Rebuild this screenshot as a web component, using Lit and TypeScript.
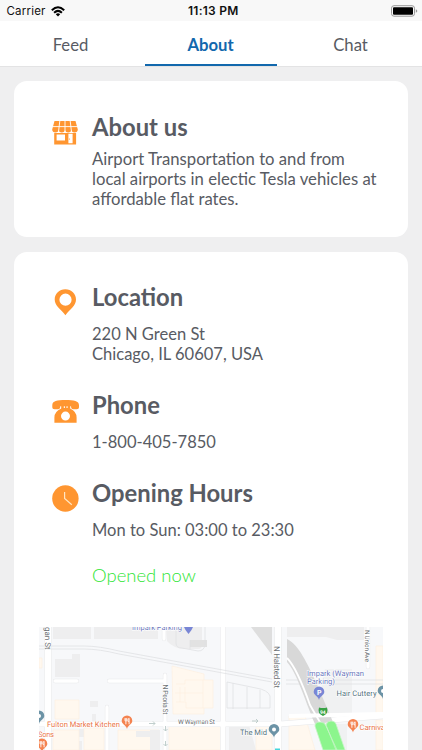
import { LitElement, html, svg, css } from "lit";
import { customElement, property } from "lit/decorators.js";

const icons: Record<string, unknown> = {
  store: svg`
    <path d="M3.5 1h21l2.3 8.4c0 1.7-1.3 3.1-3.2 3.1s-3.2-1.2-3.2-2.7c0 1.6-1.400 2.700-3.200 2.700S14 11.400 14 9.800c0 1.600-1.400 2.700-3.200 2.700S7.600 11.400 7.600 9.800c0 1.500-1.300 2.700-3.200 2.700S1.200 11.100 1.200 9.400z"/>
    <path d="M3.200 13h21.900v11.600H3.200zM5.600 14.600v6H14v-6zM17.400 13.700v9.500h4.200v-9.500z" fill-rule="evenodd"/>
    <circle cx="18.500" cy="19" r=".6"/>
    <path d="M1.500 6.600h25M8.800 1 7.600 11M14 1v11M19.200 1l1.200 10" fill="none" stroke="#fff" stroke-width=".9"/>`,
  pin: svg`<path fill-rule="evenodd" d="M14.300 1.300C8.300 1.300 3.700 5.700 3.700 11.500c0 6.400 6.200 9.600 10.700 15.800C19 21 25 17.900 25 11.500 25 5.700 20.400 1.300 14.300 1.300zM14.500 5.600a6.100 6.100 0 1 1 0 12.200 6.100 6.100 0 0 1 0-12.200z"/>`,
  phone: svg`
    <path d="M1.300 6.200C1.300 2 6 1 14.500 1S28 2 28 6.200v1.800c0 1.600-.8 2.200-2.300 2.200h-3.400c-1.700 0-2.100-.7-2.300-3H9.300C9.100 9.500 8.700 10.200 7 10.200H3.600C2.100 10.200 1.300 9.600 1.300 8z"/>
    <path fill-rule="evenodd" d="M10.200 7h2.600v2h1.100V7h1.600v2h1.100V7H19.200v2.400q6.400 3 6.400 9V23.800H3.400v-5.400q0-6 6.800-9zM14.500 12.600a4.500 4.500 0 1 0 0 9 4.500 4.500 0 0 0 0-9z"/>`,
  clock: svg`
    <circle cx="14.400" cy="14.500" r="13.200"/>
    <path d="M13.600 8v6.500l7.200 6.200" fill="none" stroke="#ffe6c4" stroke-width="1.200"/>`,
};

@customElement("info-section")
class InfoSection extends LitElement {
  @property() icon = "";
  @property() heading = "";

  static styles = css`
    :host { display: grid; grid-template-columns: 41px 1fr; }
    .icon { width: 29px; height: 29px; fill: #ff9631; margin-top: var(--icon-top, 7px); }
    h2 { margin: 0; font-size: 23.800px; line-height: 32px; font-weight: 700; white-space: nowrap; }
    .body { margin-top: var(--body-gap, 11px); font-size: var(--body-size, 16.550px); line-height: 20px; white-space: nowrap; }
  `;

  render() {
    return html`
      <svg class="icon" viewBox="0 0 29 29">${icons[this.icon]}</svg>
      <div><h2>${this.heading}</h2><div class="body"><slot></slot></div></div>
    `;
  }
}

const food = (x: number, y: number) => svg`
  <g transform="translate(${x} ${y})">
    <path class="food" d="M0-5.500a5.300 5.300 0 0 1 5.300 5.300C5.300 3.300 1 4 0 8-1 4-5.300 3.300-5.300-.2A5.300 5.300 0 0 1 0-5.500z"/>
    <path class="glyph" d="M-2-2.800v2.200c0 .6.400.9.900.9v3M-.2-2.800v2.200c0 .6-.3.900-.9.900M-1.100-2.800V0M2.100 3.300v-6C1.100-2.400.9-1 .9.300h1.200"/>
  </g>`;
const place = (x: number, y: number) => svg`
  <g transform="translate(${x} ${y})">
    <path class="place" d="M0-5.500a5.300 5.300 0 0 1 5.300 5.300C5.300 3.300 1 4 0 8-1 4-5.300 3.300-5.300-.2A5.300 5.300 0 0 1 0-5.500z"/>
    <circle r="2" fill="#fff"/>
  </g>`;

@customElement("street-map")
class StreetMap extends LitElement {
  static styles = css`
    :host { display: block; }
    svg { display: block; width: 344px; height: 123px; font-family: Roboto, sans-serif; text-rendering: geometricPrecision; }
    .block { fill: #eeeeef; }
    .shop { fill: #fff8ef; stroke: #fdeedd; stroke-width: .6; }
    .road { fill: none; stroke: #fff; stroke-linecap: round; }
    .edge { fill: none; stroke: #e7e8ea; stroke-linecap: round; }
    .rail { fill: none; stroke: #dfe1e3; stroke-width: .8; }
    .label { fill: #6c7074; stroke: #fff; stroke-width: 1.200px; paint-order: stroke; font-size: 7px; }
    .poi { font-size: 7.600px; fill: #557380; }
    .eat { fill: #ea7448; }
    .park { fill: #6b77bd; }
    .food { fill: #f48350; }
    .place { fill: #6c93a6; }
    .parking { fill: #7986d5; }
    .glyph { fill: none; stroke: #fff; stroke-width: .9; }
    .arrow { fill: none; stroke: #bacac7; stroke-width: .9; }
  `;

  render() {
    return html`<svg viewBox="39 627 344 123">
      <rect x="39" y="627" width="344" height="123" fill="#f7f8fa"/>
      <g class="block">
        <path d="M53 627h38v12H53zM94 627h64v12H94zM55 659h17v-5h8v23H55z"/>
        <path d="M90 701h8v6h-8zM92 714h4v7h-4zM79 729h5v8h-5zM73 741h9v9h-9z"/>
        <path d="M150 627h8v10h-8zM173 627h29v18q0 4-4 4h-14q-11-1-17-8l-1-14z"/>
        <path d="M287 627h77v13h-27l-11-3h-39zM229 725h20l7 25h-27z"/>
        <path d="M190 640h17v7h-17z" fill="#e2e2e2"/>
        <path d="M251 627h21v28z" fill="#dedede"/>
      </g>
      <path d="M325 669h27v45h-36zM330 724h17v26h-5z" fill="#f0f1f2"/>
      <g class="shop">
        <path d="M55 700h24v19H55zM53 730h26v20H53zM84 728h20v22H84zM118 730h41v20h-41z"/>
        <path d="M172 666l32 8v6h9v28h-9v6h-31z"/>
        <path d="M169 725h52v25h-52zM256 725h16v25h-16zM289 716h16l10 34h-26zM376 646h7v68h-7zM376 720h7v30h-7zM39 658h3v10h-3z"/>
        <path fill="none" d="M176 684h9v-4h19M175 693h28M176 702h10v6h18M203 680v28M185 687v14M180 687v15"/>
      </g>
      <path class="block" d="M136 731h24v6h-24zM150 730h10v20h-10z"/>
      <g class="edge">
        <path stroke-width="7.600" d="M48 624v130M278 624v130"/>
        <path stroke-width="5.800" d="M223 624v130M39 724H280L383 716"/>
        <path stroke-width="4.300" d="M165 675v75M55 681h22M109 681h56M107 707v43M164 627v12M368 627v40"/>
      </g>
      <g class="road">
        <path stroke-width="6.600" d="M48 624v130M278 624v130"/>
        <path stroke-width="4.800" d="M223 624v130M39 724H280L383 716"/>
        <path stroke-width="3.300" d="M165 675v75M55 681h22M109 681h56M107 707v43M164 627v12M368 627v40"/>
      </g>
      <g class="rail">
        <path d="M39 646h45q15 0 35 5l153 28M39 649h45q15 0 35 5l153 28M286 680h97M286 684h97"/>
        <path d="M227 682l29 6q12 2 14 8v12H227zM233 683v26M247 687v22M260 690v18M176 629v14q0 5 6 5l16 3q6 0 7-6v-18M190 640v9"/>
      </g>
      <path d="M287 639c12 6 20 24 29 43l17 40-18 2c-11-26-18-51-28-62z" fill="#d8d8d8"/>
      <path d="M287 658c8 8 17 30 23 47l11 19" fill="none" stroke="#fff" stroke-width="1.800"/>
      <path d="M289 716l94-2" stroke="#fff" stroke-width="4"/>
      <path d="M315 726q0-4 5-4t6 4l11 24h-14zM326 725q1-4 5-4t5 3l9 26h-9z" fill="#8cf58d" stroke="#c5f5c6" stroke-width=".8"/>
      <path class="arrow" d="M149 723.500h6m-2-2 2 2-2 2M252 721h6m-2-2 2 2-2 2M165.500 726v5m-2-2 2 2 2-2M165.500 741v5m-2-2 2 2 2-2"/>

      <text class="label" transform="translate(44.500 627) rotate(90)" style="font-size:8px">gan St</text>
      <text class="label" transform="translate(163 684.500) rotate(90)" textLength="30">N Peoria St</text>
      <text class="label" transform="translate(274 646) rotate(90)" textLength="42" style="font-size:8px">N Halsted St</text>
      <text class="label" transform="translate(365 630) rotate(90)" textLength="32" style="font-size:6.500px">N Union Ave</text>
      <text class="label" x="178" y="724" textLength="37" style="font-size:6.500px">W Wayman St</text>
      <text class="label poi park" x="132" y="630" textLength="50">Impark Parking</text>
      <path class="parking" d="M184 627h9q-1 3-4.500 7Q185 630 184 627z"/>
      <text class="label poi park" x="307" y="676.300" textLength="57">Impark (Wayman</text>
      <text class="label poi park" x="307" y="684.100" textLength="28">Parking)</text>
      <text class="label poi" x="336.500" y="696" textLength="40">Hair Cuttery</text>
      <text class="label poi" x="240" y="734.500" textLength="27">The Mid</text>
      <text class="label poi eat" x="47" y="726.500" textLength="73">Fulton Market Kitchen</text>
      <text class="label poi eat" x="38" y="737" textLength="16">Sons</text>
      <text class="label poi eat" x="359.500" y="729.500">Carnivale</text>
      <g transform="translate(319 692)">
        <path class="parking" d="M0-5.500a5.300 5.300 0 0 1 5.300 5.300C5.300 3.300 1 4 0 8-1 4-5.300 3.300-5.300-.2A5.300 5.300 0 0 1 0-5.500z"/>
        <text x="-2" y="2.600" fill="#fff" font-size="7" font-weight="700">P</text>
      </g>
      <path d="M319 707.500q4 1 8 0 2 6-4 8.500-6-2.500-4-8.500z" fill="#39a246"/>
      <text x="320" y="713.500" fill="#fff" font-size="5" font-weight="700">94</text>
      ${food(127, 721)}${food(42, 744)}${food(353, 724.5)}
      ${place(39, 716)}${place(274, 729.5)}${place(383, 691)}
      <path d="M275 748.500h5v2h-5z" fill="#45d6dc"/>
    </svg>`;
  }
}

@customElement("app-root")
class AppRoot extends LitElement {
  static styles = css`
    :host { display: flex; flex-direction: column; height: 750px; overflow: hidden; background: #efeff0; color: #585b63; font-family: Lato, sans-serif; }
    .status { flex: none; height: 21px; padding: 1px 4px 0 6.500px; box-sizing: border-box; display: grid; grid-template-columns: 1fr auto 1fr; align-items: center; background: #f8f8f8; color: #111; font: 500 11.500px/20px Inter, sans-serif; }
    .carrier { display: flex; align-items: center; gap: 5px; font-weight: 400; letter-spacing: .2px; }
    .time { font-weight: 600; font-size: 12px; letter-spacing: .25px; padding-left: 2px; }
    .battery { justify-self: end; }
    .tabs { flex: none; height: 46px; display: grid; grid-template-columns: 1fr 1fr 1fr; padding-right: 2px; box-sizing: border-box; background: #fff; border-bottom: 1px solid #e3e3e4; }
    .tab { display: flex; align-items: center; justify-content: center; font-size: 16.700px; padding-top: 4px; box-sizing: border-box; border-bottom: 2px solid transparent; margin: 0 3.500px 0 4.500px; }
    .active { color: #1268ad; font-weight: 700; border-color: #1268ad; }
    .card { flex: none; margin: 14px 14px 0; background: #fff; border-radius: 13px; box-sizing: border-box; }
    .about { height: 156px; padding: 30px 0 0 37px; --body-gap: 5.500px; --icon-top: 9px; --body-size: 16.700px; }
    .details { height: 560px; margin-top: 15px; padding: 29px 0 0 37px; }
    .phone { margin-top: 25px; --icon-top: 10px; }
    .hours { margin-top: 25px; }
    .open { margin: 25px 0 0 41px; font-size: 18.500px; line-height: 20px; font-weight: 300; color: #2fe535; }
    .map { margin: 42px 0 0 -12px; }
  `;

  render() {
    return html`
      <div class="status">
        <div class="carrier">Carrier
          <svg width="14" height="11" viewBox="0 0 14 11" fill="none" stroke="#000" stroke-width="2">
            <path d="M.8 4.200Q7-1.700 13.200 4.200M3.100 6.700Q7 3 10.900 6.700"/>
            <path d="M4.800 8.300Q7 6.400 9.200 8.300L7 10.600z" fill="#000" stroke="none"/>
          </svg>
        </div>
        <div class="time">11:13 PM</div>
        <svg class="battery" width="27" height="12" viewBox="0 0 27 12">
          <rect x=".5" y=".7" width="23" height="10.500" rx="2.500" fill="none" stroke="#999"/>
          <rect x="2" y="2.200" width="20" height="7.500" rx="1"/>
          <path d="M24.800 4.200q1.500.5 1.500 1.800t-1.500 1.800z" fill="#999"/>
        </svg>
      </div>
      <nav class="tabs">
        <div class="tab">Feed</div><div class="tab active">About</div><div class="tab">Chat</div>
      </nav>
      <section class="card about">
        <info-section icon="store" heading="About us">Airport Transportation to and from<br>local airports in electic Tesla vehicles at<br>affordable flat rates.</info-section>
      </section>
      <section class="card details">
        <info-section icon="pin" heading="Location">220 N Green St<br>Chicago, IL 60607, USA</info-section>
        <info-section class="phone" icon="phone" heading="Phone">1-800-405-7850</info-section>
        <info-section class="hours" icon="clock" heading="Opening Hours">Mon to Sun: 03:00 to 23:30</info-section>
        <div class="open">Opened now</div>
        <street-map class="map"></street-map>
      </section>
    `;
  }
}
